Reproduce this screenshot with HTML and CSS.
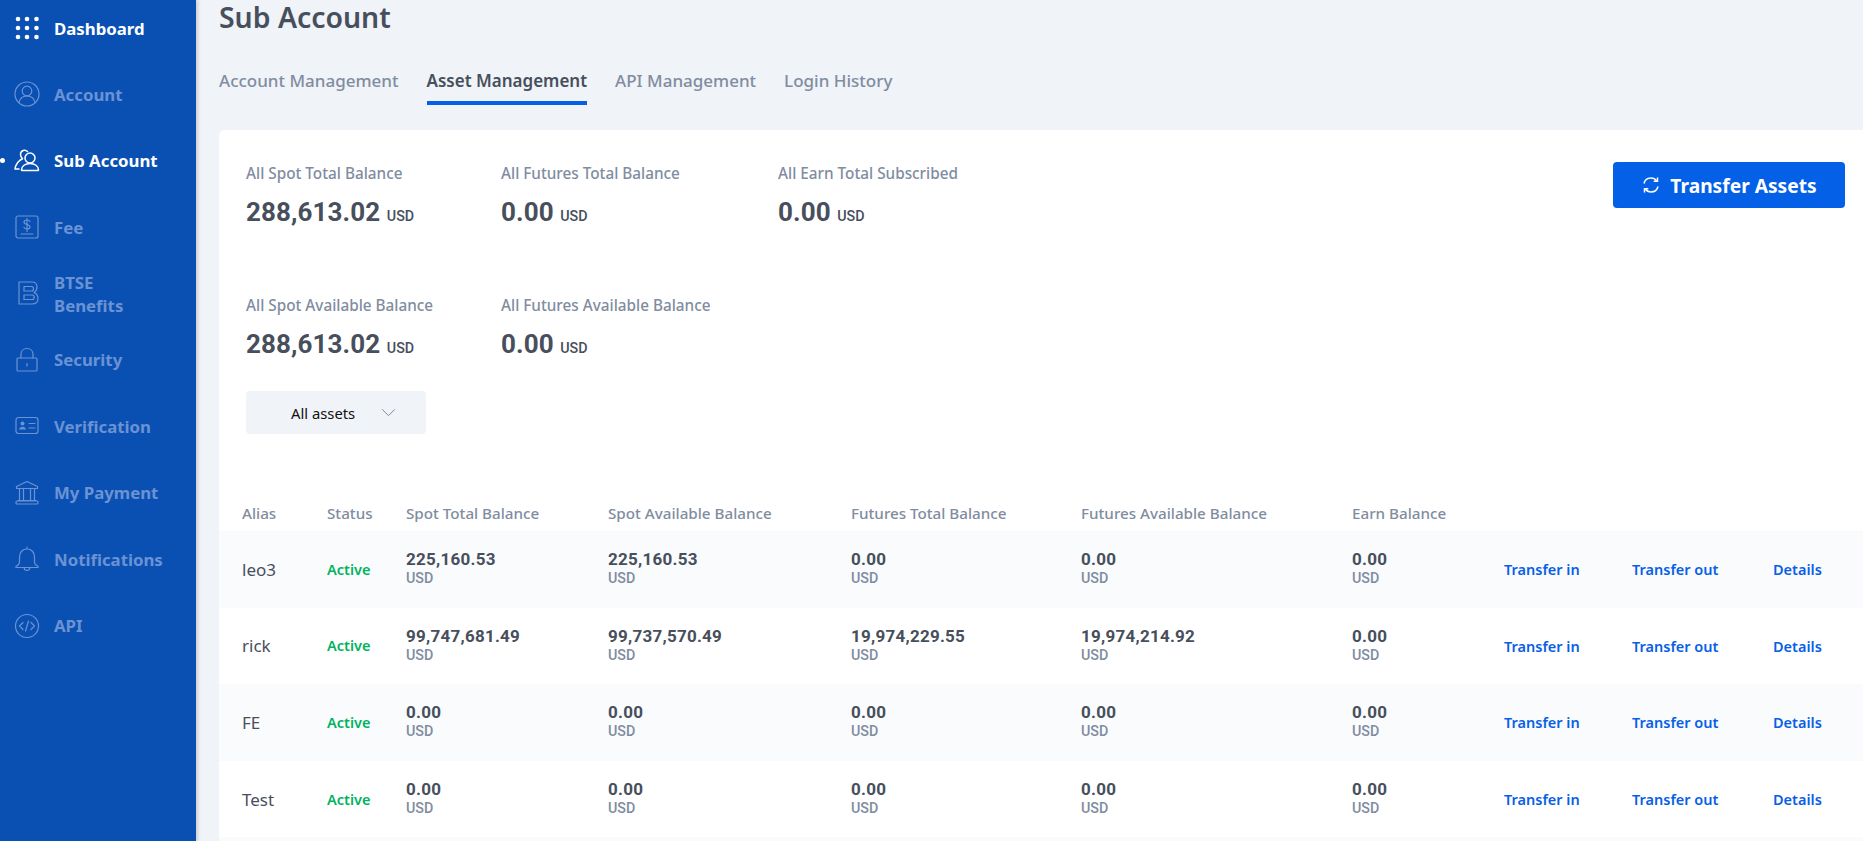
FILE: index.html
```html
<!DOCTYPE html>
<html lang="en">
<head>
<meta charset="utf-8">
<title>Sub Account</title>
<link rel="stylesheet" href="styles.css">
</head>
<body>
<div class="app">
  <aside class="sidebar">
    <a class="nav-item on"><svg class="ico dots" viewBox="0 0 26 26"><circle cx="4" cy="4" r="2.300"/><circle cx="13" cy="4" r="2.300"/><circle cx="22.500" cy="4" r="2.300"/><circle cx="4" cy="13" r="2.300"/><circle cx="13" cy="13" r="2.300"/><circle cx="22.500" cy="13" r="2.300"/><circle cx="4" cy="22" r="2.300"/><circle cx="13" cy="22" r="2.300"/><circle cx="22.500" cy="22" r="2.300"/></svg><span>Dashboard</span></a>
    <a class="nav-item"><svg class="ico" viewBox="0 0 26 26"><circle cx="13" cy="13" r="12"/><circle cx="13" cy="10" r="4.800"/><path d="M5 21.500c.8-4 4-6.500 8-6.500s7.200 2.500 8 6.500"/></svg><span>Account</span></a>
    <a class="nav-item on active"><svg class="ico thick" viewBox="0 0 26 26"><circle cx="16" cy="10" r="5"/><path d="M7.500 22c0-4 3.800-6.500 8.500-6.500s8.500 2.500 8.500 6.500c0 .3-.2.500-.5.500H8c-.3 0-.5-.2-.5-.5z"/><path d="M13.500 3.500C11 1 6.500 2.500 6.500 6.500c0 1.800.8 3.200 2 4.200C4.500 12.500 1.500 17 1 21h4"/></svg><span>Sub Account</span></a>
    <a class="nav-item"><svg class="ico" viewBox="0 0 26 26"><rect x="2" y="2" width="22" height="22" rx="2"/><path d="M7 20h12"/><path d="M16 7.500c-.5-1-1.500-1.500-3-1.500-1.700 0-3 .8-3 2.200 0 3 6 1.600 6 4.600 0 1.400-1.300 2.200-3 2.200-1.500 0-2.600-.6-3-1.600M13 4.500v13"/></svg><span>Fee</span></a>
    <a class="nav-item"><svg class="ico" viewBox="0 0 26 26"><path d="M5 1h13c3 0 5 2 5 5 0 2.500-1.200 4.500-3 5.500 2.300 1 4 3 4 6 0 3.500-2.500 5.500-6 5.500H5z"/><path d="M10 5.500h7.500c1.300 0 2 .8 2 2.200s-.7 2.300-2 2.300H10zM10 14h8c1.300 0 2.200.9 2.200 2.200 0 1.300-.9 2.300-2.200 2.300h-8z"/></svg><span>BTSE<br>Benefits</span></a>
    <a class="nav-item"><svg class="ico" viewBox="0 0 26 26"><rect x="3" y="11" width="20" height="13" rx="1"/><path d="M7 11V7.500C7 4 9.500 1.500 13 1.500S19 4 19 7.500V11"/><path d="M13 16.500v2.500"/></svg><span>Security</span></a>
    <a class="nav-item"><svg class="ico" viewBox="0 0 26 26"><rect x="2" y="4.500" width="22" height="16" rx="2.500"/><circle class="solid" cx="8.500" cy="10.500" r="2"/><path class="solid" d="M5 16.500c.3-2 1.800-2.800 3.500-2.800s3.200.8 3.500 2.800z"/><path d="M15 10.500h6M15 15h6"/></svg><span>Verification</span></a>
    <a class="nav-item"><svg class="ico" viewBox="0 0 26 26"><path d="M13 1.500 2.500 6.500v2h21v-2z"/><path d="M5.500 8.500v12M9.500 8.500v12M16.500 8.500v12M20.500 8.500v12M4 20.500h18"/><rect x="2" y="21" width="22" height="3" rx="1"/></svg><span>My Payment</span></a>
    <a class="nav-item"><svg class="ico" viewBox="0 0 26 26"><path d="M13 3c-4.500 0-7.500 3.300-7.500 8v4.500c0 2-1.500 4-3.500 4.800v1.200h22v-1.200c-2-.8-3.500-2.800-3.500-4.800V11c0-4.700-3-8-7.500-8zM13 1v2M10 21.500c.3 2 1.500 3 3 3s2.700-1 3-3"/></svg><span>Notifications</span></a>
    <a class="nav-item"><svg class="ico" viewBox="0 0 26 26"><circle cx="13" cy="13" r="11.500"/><path d="M9 9.500 5.500 13 9 16.500M17 9.500l3.500 3.500-3.500 3.500M14.500 8l-3 10"/></svg><span>API</span></a>
  </aside>

  <main class="main">
    <h1 class="title">Sub Account</h1>
    <nav class="tabs">
      <a class="tab">Account Management</a>
      <a class="tab current">Asset Management</a>
      <a class="tab">API Management</a>
      <a class="tab">Login History</a>
    </nav>

    <section class="card">
      <div class="summary">
        <div class="stats">
          <div class="stat-row">
            <div class="stat s1"><div class="stat-label">All Spot Total Balance</div><div class="stat-value">288,613.02 <small>USD</small></div></div>
            <div class="stat s2"><div class="stat-label">All Futures Total Balance</div><div class="stat-value">0.00 <small>USD</small></div></div>
            <div class="stat"><div class="stat-label">All Earn Total Subscribed</div><div class="stat-value">0.00 <small>USD</small></div></div>
          </div>
          <div class="stat-row last">
            <div class="stat s1"><div class="stat-label">All Spot Available Balance</div><div class="stat-value">288,613.02 <small>USD</small></div></div>
            <div class="stat s2"><div class="stat-label">All Futures Available Balance</div><div class="stat-value">0.00 <small>USD</small></div></div>
          </div>
        </div>
        <button class="transfer-btn"><svg class="btn-ico" viewBox="0 0 20 20"><path d="M3 8.500C3.700 5.200 6.500 3 10 3c2.300 0 4.300 1 5.500 2.700"/><path d="M17 11.500c-.7 3.300-3.500 5.500-7 5.500-2.300 0-4.300-1-5.500-2.700"/><path d="M16.500 2.500v3.800h-3.800M3.500 17.500v-3.800h3.800"/></svg>Transfer Assets</button>
      </div>

      <div class="select"><span>All assets</span><svg class="chev" viewBox="0 0 16 10"><path d="M1 1.500 8 8.500l7-7"/></svg></div>

      <div class="table">
        <div class="row head">
          <div>Alias</div><div>Status</div><div>Spot Total Balance</div><div>Spot Available Balance</div><div>Futures Total Balance</div><div>Futures Available Balance</div><div>Earn Balance</div><div></div><div></div><div></div>
        </div>
        <div class="row body">
          <div class="alias">leo3</div><div class="status">Active</div>
          <div class="amt"><b>225,160.53</b><i>USD</i></div><div class="amt"><b>225,160.53</b><i>USD</i></div><div class="amt"><b>0.00</b><i>USD</i></div><div class="amt"><b>0.00</b><i>USD</i></div><div class="amt"><b>0.00</b><i>USD</i></div>
          <a class="link">Transfer in</a><a class="link">Transfer out</a><a class="link">Details</a>
        </div>
        <div class="row body">
          <div class="alias">rick</div><div class="status">Active</div>
          <div class="amt"><b>99,747,681.49</b><i>USD</i></div><div class="amt"><b>99,737,570.49</b><i>USD</i></div><div class="amt"><b>19,974,229.55</b><i>USD</i></div><div class="amt"><b>19,974,214.92</b><i>USD</i></div><div class="amt"><b>0.00</b><i>USD</i></div>
          <a class="link">Transfer in</a><a class="link">Transfer out</a><a class="link">Details</a>
        </div>
        <div class="row body">
          <div class="alias">FE</div><div class="status">Active</div>
          <div class="amt"><b>0.00</b><i>USD</i></div><div class="amt"><b>0.00</b><i>USD</i></div><div class="amt"><b>0.00</b><i>USD</i></div><div class="amt"><b>0.00</b><i>USD</i></div><div class="amt"><b>0.00</b><i>USD</i></div>
          <a class="link">Transfer in</a><a class="link">Transfer out</a><a class="link">Details</a>
        </div>
        <div class="row body">
          <div class="alias">Test</div><div class="status">Active</div>
          <div class="amt"><b>0.00</b><i>USD</i></div><div class="amt"><b>0.00</b><i>USD</i></div><div class="amt"><b>0.00</b><i>USD</i></div><div class="amt"><b>0.00</b><i>USD</i></div><div class="amt"><b>0.00</b><i>USD</i></div>
          <a class="link">Transfer in</a><a class="link">Transfer out</a><a class="link">Details</a>
        </div>
        <div class="row body"></div>
      </div>
    </section>
  </main>
</div>
</body>
</html>
```
FILE: styles.css
```css
* { box-sizing: border-box; }
html, body { margin: 0; height: 100%; overflow: hidden; }
body { font-family: "Noto Sans", "Liberation Sans", sans-serif; background: #f0f3f8; color: #474f5c; }

.app { display: flex; height: 841px; overflow: hidden; }

.sidebar {
  width: 196px; flex: none; background: #0a50b3;
  display: flex; flex-direction: column; gap: 10.4px;
  box-shadow: 2px 0 3px rgba(0,0,0,.15);
  position: relative;
}
.nav-item {
  height: 56px; display: flex; align-items: center; gap: 14px; padding-left: 14px;
  color: #6a93d3; font-size: 16.800px; font-weight: 700; line-height: 23px; position: relative;
}
.nav-item.on { color: #fff; }
.active::before {
  content: ""; position: absolute; left: 0; top: 25.500px; width: 5px; height: 5px;
  border-radius: 50%; background: #fff;
}
.ico { width: 26px; height: 26px; flex: none; fill: none; stroke: currentColor; stroke-width: 1.200; stroke-linecap: round; stroke-linejoin: round; }
.ico.thick { stroke-width: 1.500; }
.ico.dots { fill: currentColor; stroke: none; }
.ico .solid { fill: currentColor; stroke: none; }

.main { flex: 1; min-width: 0; padding-left: 23px; }
.title { margin: 0; height: 36px; font-size: 28.400px; line-height: 34px; font-weight: 600; color: #474f5c; }
.tabs { display: flex; gap: 28px; margin-top: 26px; height: 43px; }
.tab { font-size: 17px; line-height: 38px; height: 43px; font-weight: 500; color: #808ca0; }
.tab.current { color: #474f5c; font-weight: 600; border-bottom: 4px solid #0560e8; }

.card { margin-top: 25px; background: #fff; border-radius: 6px 0 0 0; height: 720px; }

.summary { display: flex; justify-content: space-between; align-items: flex-start; padding: 32px 18px 0 27px; }
.stat-row { display: flex; height: 132px; }
.stat-row.last { height: 97px; }
.stat.s1 { width: 255px; }
.stat.s2 { width: 277px; }
.stat-label { font-size: 15.300px; line-height: 22px; font-weight: 500; color: #808ca0; }
.stat-value { margin-top: 10px; font-family: Roboto, sans-serif; font-size: 26px; line-height: 36px; font-weight: 700; letter-spacing: .1px; color: #474f5c; }
.stat-value small { font-size: 14.300px; font-weight: 500; letter-spacing: 0; }

.transfer-btn {
  width: 232px; height: 46px; display: flex; align-items: center; justify-content: center; gap: 9px;
  border: 0; border-radius: 4px; background: #0560e8; color: #fff;
  font-family: inherit; font-size: 19.200px; font-weight: 700;
}
.btn-ico { width: 20px; height: 20px; fill: none; stroke: #fff; stroke-width: 1.500; }

.select {
  margin-left: 27px; width: 180px; height: 43px; background: #f0f3f8; border-radius: 4px;
  display: flex; align-items: center; padding-left: 45px; font-size: 14.800px; color: #111;
}
.chev { width: 15px; height: 9px; margin-left: 26px; fill: none; stroke: #7d8898; stroke-width: 1.100; }

.table { margin-top: 61px; }
.row { display: grid; grid-template-columns: 85px 79px 202px 243px 230px 271px 152px 128px 141px 1fr; padding-left: 23px; }
.row.head { height: 36px; align-items: center; font-size: 15.200px; font-weight: 500; color: #808ca0; }
.row.body { height: 76.600px; align-items: center; }
.row.body:nth-child(even) { background: #fafbfd; }
.alias { font-size: 17px; color: #474f5c; }
.status { font-size: 14.500px; font-weight: 600; color: #00b35f; margin-bottom: 1px; }
.amt { display: flex; flex-direction: column; }
.amt b { font-family: Roboto, sans-serif; font-size: 17px; line-height: 19px; font-weight: 700; letter-spacing: .25px; color: #474f5c; }
.amt i { font-family: Roboto, sans-serif; font-style: normal; font-size: 14.300px; line-height: 19px; font-weight: 500; color: #808ca0; }
.link { font-size: 14.500px; font-weight: 600; color: #0760e6; }
```
